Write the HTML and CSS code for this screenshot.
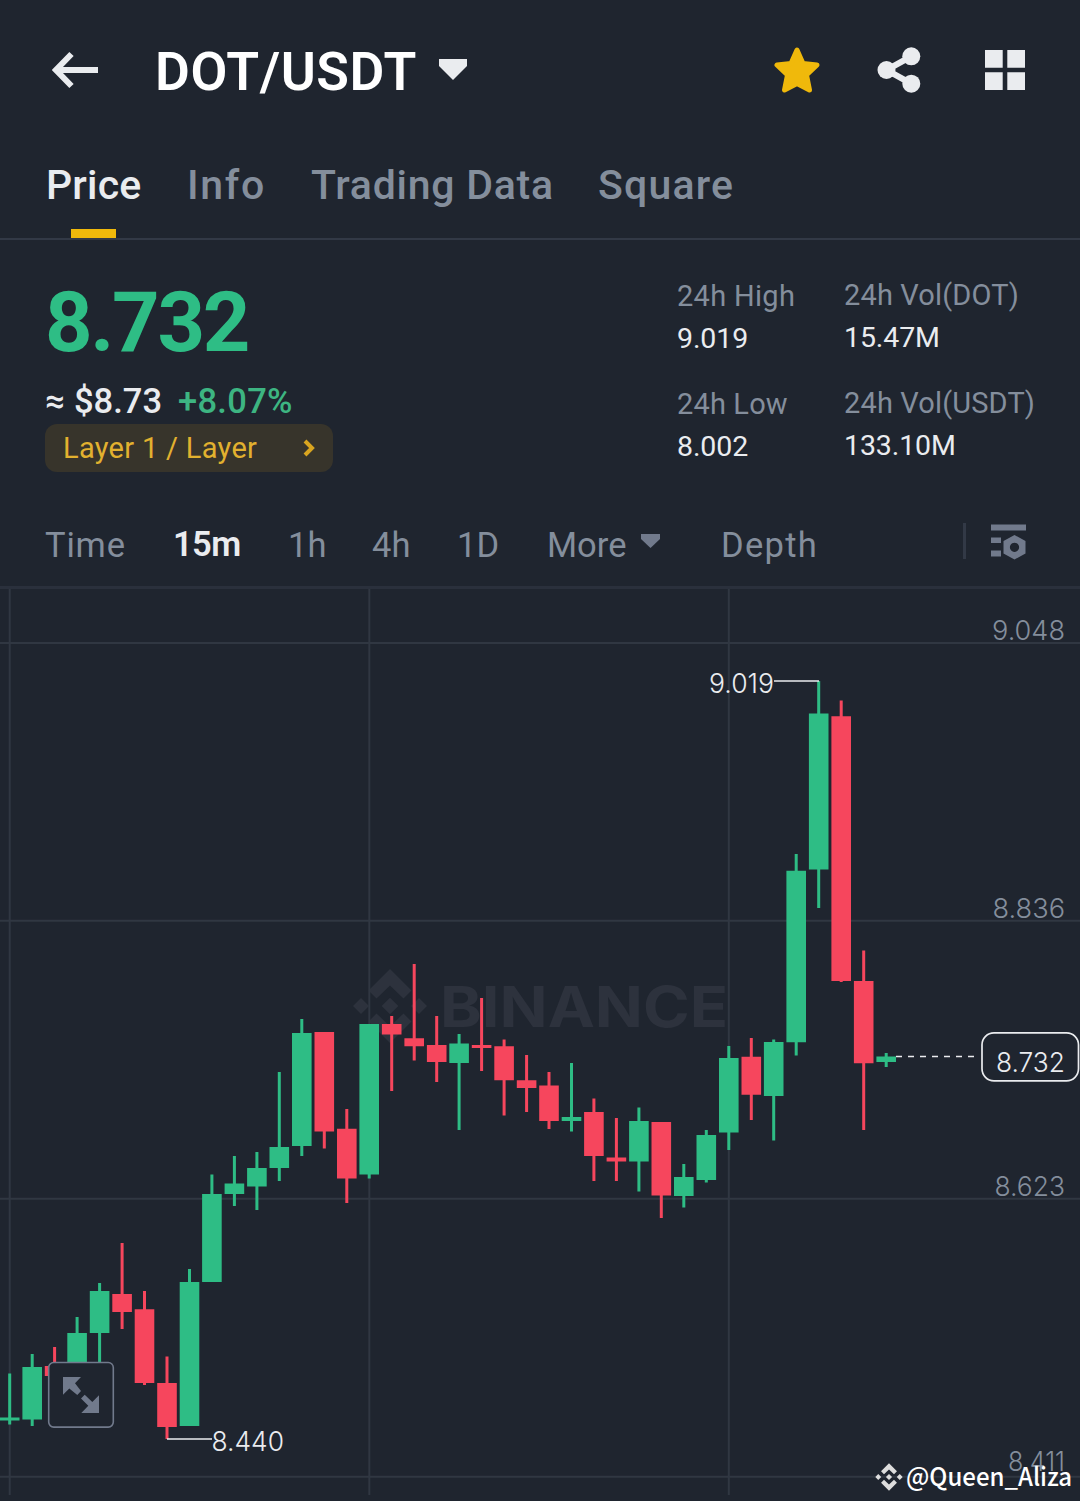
FILE: index.html
```html
<!DOCTYPE html>
<html lang="en">
<head>
<meta charset="utf-8">
<title>DOT/USDT</title>
<link rel="stylesheet" href="styles.css">
</head>
<body>
<header class="topbar">
  <svg class="back" width="46" height="38" viewBox="52 51 46 38"><path d="M98 70H57M71.500 54L56 70L71.500 86" fill="none" stroke="#eaecef" stroke-width="6"/></svg>
  <h1 class="pair">DOT/USDT</h1>
  <svg class="pair-caret" width="28" height="22" viewBox="0 0 28 22"><path d="M0 0H28V7L14 21L0 7Z" fill="#eaecef"/></svg>
  <div class="actions">
    <svg width="46" height="46" viewBox="0 0 46 46"><path d="M23 3L29 16.500L43 18L32.500 28L35.500 43L23 36.500L10.500 43L13.500 28L3 18L17 16.500Z" fill="#f0b90b" stroke="#f0b90b" stroke-width="5" stroke-linejoin="round"/></svg>
    <svg width="44" height="46" viewBox="0 0 44 46"><path d="M34 9.500L9.500 23L34 36.500" fill="none" stroke="#eaecef" stroke-width="6"/><g fill="#eaecef"><circle cx="9.500" cy="23" r="9"/><circle cx="34.300" cy="9.300" r="9"/><circle cx="34.300" cy="36.700" r="9"/></g></svg>
    <svg width="40" height="40" viewBox="0 0 40 40"><path d="M0 0H17.700V17.700H0ZM22.300 0H40V17.700H22.300ZM0 22.300H17.700V40H0ZM22.300 22.300H40V40H22.300Z" fill="#eaecef"/></svg>
  </div>
</header>
<nav class="tabs">
  <a class="tab tab-active">Price</a>
  <a class="tab tab-info">Info</a>
  <a class="tab tab-data">Trading Data</a>
  <a class="tab tab-square">Square</a>
</nav>
<section class="summary">
  <div class="quote">
    <div class="last">8.732</div>
    <div class="change"><span class="approx">≈ </span><span class="fiat">$8.73</span><span class="percent">+8.07%</span></div>
    <div class="tag"><span>Layer 1 / Layer</span><svg width="12" height="18" viewBox="0 0 12 18"><path d="M2 2L9 9L2 16" fill="none" stroke="#d9a520" stroke-width="4"/></svg></div>
  </div>
  <dl class="stats">
    <div class="stat"><dt class="l-high">24h High</dt><dd>9.019</dd></div>
    <div class="stat"><dt class="l-low">24h Low</dt><dd>8.002</dd></div>
  </dl>
  <dl class="stats stats-volume">
    <div class="stat"><dt class="l-dot">24h Vol(DOT)</dt><dd>15.47M</dd></div>
    <div class="stat"><dt class="l-usdt">24h Vol(USDT)</dt><dd>133.10M</dd></div>
  </dl>
</section>
<nav class="intervals">
  <a class="i-time">Time</a><a class="i-15m">15m</a><a class="i-1h">1h</a><a class="i-4h">4h</a><a class="i-1d">1D</a>
  <a class="i-more">More<svg width="19" height="14" viewBox="0 0 19 14"><path d="M0 0H19V5L9.500 14L0 5Z" fill="#717a8c"/></svg></a>
  <a class="i-depth">Depth</a>
  <span class="divider"></span>
  <svg class="settings" width="36" height="36" viewBox="990 524.500 36 36"><path d="M991 525H1026V531H991ZM991 538H1001V543.500H991ZM991 551H1001V557H991Z" fill="#717a8c"/><path fill-rule="evenodd" d="M1014.500 535.500L1025.500 541.500V554L1014.500 560L1003.500 554V541.500ZM1014.500 543.200a4.600 4.600 0 1 0 .01 0Z" fill="#717a8c"/></svg>
</nav>
<main class="chart">
<svg class="plot" width="1080" height="912" viewBox="0 589 1080 912">
  <defs>
    <path id="logo" d="M0 -37L21.500 -15.500L13.500 -7.500L0 -20.500L-13.500 -7.500L-21.500 -15.500ZM0 37L21.500 15.500L13.500 7.500L0 20.500L-13.500 7.500L-21.500 15.500ZM0 -8.300L8.300 0L0 8.300L-8.300 0ZM-29 -8L-21 0L-29 8L-37 0ZM29 -8L37 0L29 8L21 0Z"/>
  </defs>
  <g class="watermark"><use href="#logo" x="390" y="1006"/><text x="440" y="1026.500" textLength="288" lengthAdjust="spacingAndGlyphs">BINANCE</text></g>
  <path class="grid" d="M0 643H1080M0 920.700H1080M0 1198.700H1080M0 1476.800H1080M9.700 589V1495M369.300 589V1495M728.800 589V1495"/>
  <g class="axis">
    <text x="992" y="639.500" textLength="73" lengthAdjust="spacingAndGlyphs">9.048</text>
    <text x="992.500" y="917.500" textLength="72.500" lengthAdjust="spacingAndGlyphs">8.836</text>
    <text x="994.500" y="1195.500" textLength="70.500" lengthAdjust="spacingAndGlyphs">8.623</text>
    <text x="1008" y="1470.500" textLength="57" lengthAdjust="spacingAndGlyphs">8.411</text>
  </g>
  <path class="up wick" d="M9.700 1373.500V1424.500M32.200 1354V1426M77.100 1317V1370M99.600 1283V1370M189.500 1269V1426M211.900 1174.500V1282M234.400 1156V1206M256.900 1152V1210M279.300 1072V1181M301.800 1019V1156M369.200 1024V1178.500M459.100 1034V1130M571.500 1063V1131.500M638.900 1107.500V1191.500M683.800 1164V1207.500M706.300 1130V1182.500M728.800 1046V1150M773.700 1039.500V1140.500M796.200 854V1055.500M818.700 681V908M886.200 1053V1067"/>
  <path class="up body" d="M9.700 1417.500V1420.500M32.200 1367V1419.500M77.100 1333V1370M99.600 1291V1333M189.500 1282V1426M211.900 1194V1282M234.400 1183.500V1194M256.900 1168V1186.500M279.300 1147V1168M301.800 1033V1146M369.200 1024V1174.500M459.100 1043.500V1063M571.500 1117V1121M638.900 1121V1161.500M683.800 1177V1196M706.300 1135V1180M728.800 1058V1132.500M773.700 1042V1096M796.200 870.700V1042.300M818.700 713.500V869.500M886.200 1056.500V1062"/>
  <path class="down wick" d="M54.600 1347V1376M122.100 1243V1329M144.500 1291V1385M167 1356.500V1439M324.300 1032V1148.500M346.800 1109V1203M391.700 1016V1091M414.200 964V1060.500M436.700 1016V1082M481.600 998V1071M504.100 1039.500V1115.500M526.600 1055V1112M549 1072V1129M593.900 1098.500V1181M616.400 1118V1181M661.300 1122V1218M751.300 1038V1120M841.200 700.500V982M863.700 950.500V1130"/>
  <path class="down body" d="M54.600 1366V1376M122.100 1294V1312M144.500 1309.300V1383M167 1383V1427M324.300 1032V1131.500M346.800 1128.700V1178.500M391.700 1024V1034.500M414.200 1038.300V1046.300M436.700 1045V1062M481.600 1045V1048M504.100 1046.300V1080.300M526.600 1080.300V1088M549 1085.500V1121M593.900 1112V1156M616.400 1157.500V1161.500M661.300 1122V1195.500M751.300 1056.700V1094.700M841.200 716.300V981M863.700 981V1063.300"/>
  <g class="mark">
    <path d="M774 681H819M167 1439H212"/><path d="M896 1056.500H975" stroke-dasharray="6 6"/>
    <rect x="982" y="1032.800" width="96.500" height="48" rx="12"/>
    <text x="709" y="692.500" textLength="65" lengthAdjust="spacingAndGlyphs">9.019</text>
    <text x="211.500" y="1450.500" textLength="72.500" lengthAdjust="spacingAndGlyphs">8.440</text>
    <text x="996" y="1071.500" textLength="69" lengthAdjust="spacingAndGlyphs">8.732</text>
  </g>
  <g class="expand">
    <rect x="48.700" y="1362.500" width="64.600" height="64.600" rx="5"/>
    <path d="M63 1377H81L75 1383.300L81 1391L77.300 1395L69.300 1388.500L63 1394.700ZM99 1413H81.300L88.300 1405.800L81 1398.500L84.700 1394.800L92.300 1402L99 1395.300Z"/>
  </g>
  <g class="credit"><use href="#logo" transform="translate(889 1477) scale(.37)"/><text x="906" y="1486" textLength="166" lengthAdjust="spacingAndGlyphs">@Queen_Aliza</text></g>
</svg>
</main>
</body>
</html>
```
FILE: styles.css
```css
* { box-sizing: border-box; }
body { margin: 0; width: 1080px; height: 1501px; overflow: hidden; background: #1f252f; color: #848e9c; font-family: Roboto, "Noto Sans", sans-serif; white-space: nowrap; }
svg { display: block; flex: none; }
.topbar { height: 140px; padding: 0 55px 0 52px; display: flex; align-items: center; }
.pair { margin: 4px 0 0 57px; width: 284px; font-size: 53.5px; font-weight: 600; letter-spacing: .55px; line-height: 64px; color: #fff; }
.pair-caret { margin-top: -1px; }
.actions { margin-left: auto; display: flex; align-items: center; }
.actions svg + svg { margin-left: 57px; }
.actions svg + svg + svg { margin-left: 64px; }
.tabs { height: 100px; border-bottom: 2px solid #323946; padding-left: 46px; display: flex; font-size: 41px; font-weight: 500; line-height: 90px; }
.tab { position: relative; }
.tab-active { width: 141px; color: #eaecef; letter-spacing: .2px; }
.tab-active::after { content: ""; position: absolute; left: 25px; bottom: 0; width: 45px; height: 9px; background: #f0b90b; }
.tab-info { width: 124px; letter-spacing: 1.7px; }
.tab-data { width: 287px; letter-spacing: .75px; }
.tab-square { letter-spacing: 1.2px; }
.summary { height: 260px; padding: 30px 0 0 45px; display: flex; }
.quote { width: 632px; }
.last { height: 108px; line-height: 105px; font-size: 83px; font-weight: 700; color: #2ebd85; letter-spacing: -2.3px; }
.change { height: 46px; line-height: 47px; font-size: 34.5px; font-weight: 500; display: flex; color: #eaecef; }
.approx { width: 29px; }
.fiat { width: 104px; }
.percent { color: #3db582; letter-spacing: .3px; }
.tag { width: 288px; height: 48px; border-radius: 12px; background: #37342b; color: #e2b12f; padding: 0 18px; display: flex; align-items: center; justify-content: space-between; font-size: 29px; letter-spacing: .3px; line-height: 49px; }
.stats { margin: 5px 0 0; width: 167px; }
.stats-volume { margin-top: 4px; }
.stat { height: 108px; }
.stats dt { height: 42px; line-height: 42px; font-size: 29px; letter-spacing: .15px; }
.stats .l-high { letter-spacing: .3px; }
.stats dd { margin: 0; line-height: 43px; font-size: 28.5px; color: #eaecef; font-weight: 450; letter-spacing: -.1px; }
.intervals { height: 86px; padding-left: 45px; display: flex; font-size: 34.5px; line-height: 90px; }
.i-time { width: 128px; letter-spacing: .8px; }
.i-15m { width: 115px; color: #eaecef; font-weight: 600; letter-spacing: -.6px; line-height: 89px; }
.i-1h { width: 84px; }
.i-4h { width: 85px; }
.i-1d { width: 90px; }
.i-more { width: 174px; display: flex; }
.i-more svg { margin: 34px 0 0 15px; }
.i-depth { width: 242px; letter-spacing: 1.3px; }
.divider { width: 3px; height: 36px; margin-top: 23px; background: #323946; }
.settings { margin: 24px 0 0 24px; }
.chart { border-top: 3px solid #2a303c; }
.grid { stroke: #303742; stroke-width: 2; }
.wick { stroke-width: 3; }
.body { stroke-width: 19.6; }
.up { stroke: #2ebd85; }
.down { stroke: #f6465d; }
.axis, .mark { font-family: Inter, sans-serif; font-weight: 300; font-size: 27px; }
.axis { fill: #848e9c; }
.mark text { fill: #eaecef; }
.mark path, .mark rect { fill: none; stroke: #eaecef; stroke-width: 1.7; }
.watermark { fill: #2d323d; font-family: Inter, sans-serif; font-weight: 700; font-size: 56px; }
.expand rect { fill: #1f252f; stroke: #717a8c; stroke-width: 1.6; }
.expand path { fill: #717a8c; }
.credit { fill: #fff; font-family: "Noto Sans CJK SC", sans-serif; font-weight: 500; font-size: 25px; }
.credit use { fill: #dddddd; }
```
